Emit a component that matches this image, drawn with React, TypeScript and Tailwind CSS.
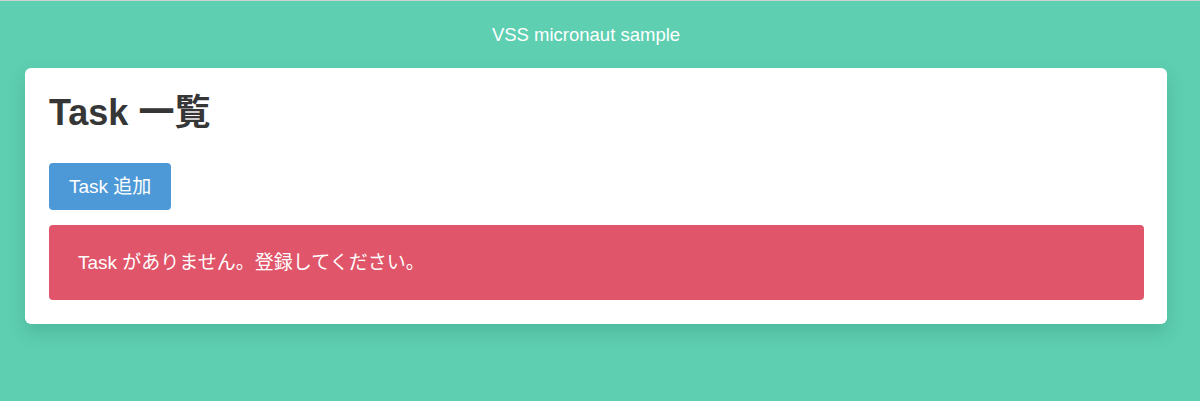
export default function App() {
    const font = { fontFamily: '"Liberation Sans", "Noto Sans CJK JP", sans-serif' };

    return (
        <div className="min-h-[401px] bg-[#5ecfb1] border-t border-[#cfd4d3] flex flex-col" style={font}>
            {/* Header */}
            <div className="pt-[22px] pb-[21px] pr-[28px] flex justify-center">
                <span className="text-[18.5px] leading-[24px] text-white">VSS micronaut sample</span>
            </div>

            {/* Card */}
            <div className="ml-[25px] mr-[33px] bg-white rounded-[6px] shadow-[0_8px_18px_rgba(10,80,60,0.18)] pt-[24px] pb-[24px] pl-[24px] pr-[23px] flex flex-col">
                <h1 className="text-[36px] leading-[42px] font-bold text-[#363636]">Task 一覧</h1>

                <div className="mt-[29px]">
                    <button className="h-[47px] px-[20px] rounded-[4px] bg-[#4d99d8] text-white text-[19px] leading-[24px]">
                        Task 追加
                    </button>
                </div>

                <div className="mt-[15px] h-[75px] rounded-[4px] bg-[#e05569] pl-[29px] flex items-center">
                    <p className="text-[19px] leading-[27px] text-white">Task がありません。登録してください。</p>
                </div>
            </div>
        </div>
    )
}
